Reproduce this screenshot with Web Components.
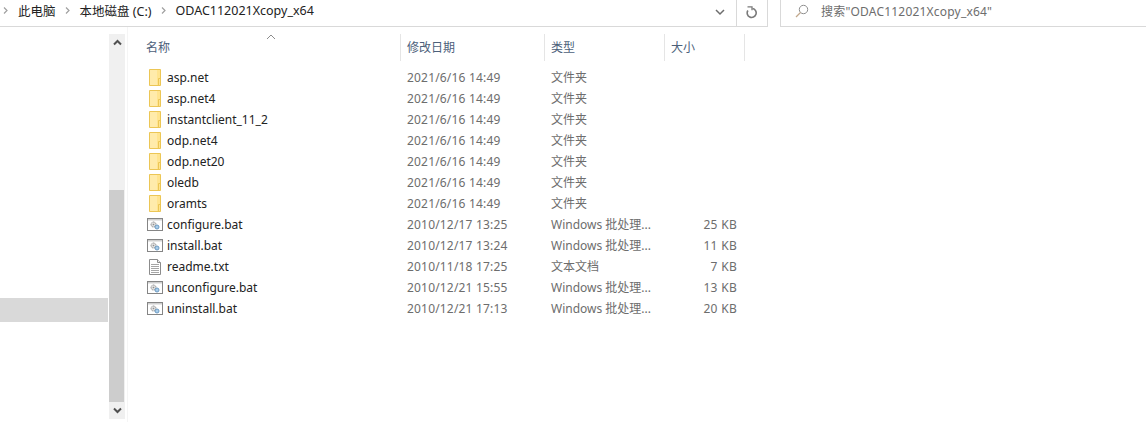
<!DOCTYPE html>
<html>
<head>
<meta charset="utf-8">
<title>ODAC112021Xcopy_x64</title>
<style>
  html, body { margin: 0; height: 100%; background: #fff; overflow: hidden; }
  body { font: 12px "Noto Sans", "Noto Sans CJK SC", sans-serif; }
</style>
</head>
<body>
<explorer-window>
  <address-bar slot="top">
    <bread-crumb>此电脑</bread-crumb>
    <bread-crumb>本地磁盘 (C:)</bread-crumb>
    <bread-crumb>ODAC112021Xcopy_x64</bread-crumb>
  </address-bar>
  <nav-pane slot="nav"></nav-pane>
  <file-list slot="files">
    <file-row kind="folder" name="asp.net" date="2021/6/16 14:49" type="文件夹"></file-row>
    <file-row kind="folder" name="asp.net4" date="2021/6/16 14:49" type="文件夹"></file-row>
    <file-row kind="folder" name="instantclient_11_2" date="2021/6/16 14:49" type="文件夹"></file-row>
    <file-row kind="folder" name="odp.net4" date="2021/6/16 14:49" type="文件夹"></file-row>
    <file-row kind="folder" name="odp.net20" date="2021/6/16 14:49" type="文件夹"></file-row>
    <file-row kind="folder" name="oledb" date="2021/6/16 14:49" type="文件夹"></file-row>
    <file-row kind="folder" name="oramts" date="2021/6/16 14:49" type="文件夹"></file-row>
    <file-row kind="bat" name="configure.bat" date="2010/12/17 13:25" type="Windows 批处理..." size="25 KB"></file-row>
    <file-row kind="bat" name="install.bat" date="2010/12/17 13:24" type="Windows 批处理..." size="11 KB"></file-row>
    <file-row kind="txt" name="readme.txt" date="2010/11/18 17:25" type="文本文档" size="7 KB"></file-row>
    <file-row kind="bat" name="unconfigure.bat" date="2010/12/21 15:55" type="Windows 批处理..." size="13 KB"></file-row>
    <file-row kind="bat" name="uninstall.bat" date="2010/12/21 17:13" type="Windows 批处理..." size="20 KB"></file-row>
  </file-list>
</explorer-window>

<script>
const ICONS = {
  folder: `<svg width="16" height="18" viewBox="0 0 16 18">
    <path d="M2.500 0.500h11v16h-11z" fill="#ffe48f"/>
    <path d="M3 1h7v15H3z" fill="#ffebab"/>
    <path d="M2.500 0.500h11v16h-11z" fill="none" stroke="#ecc655"/>
    <path d="M11.500 16.500v-7h2" fill="none" stroke="#ecc655"/>
  </svg>`,
  bat: `<svg width="16" height="18" viewBox="0 0 16 18">
    <rect x="0.500" y="2.500" width="15" height="12" fill="#fff" stroke="#858585"/>
    <path d="M1 3h14v1.500H1z" fill="#cfcfcf"/>
    <circle cx="6.500" cy="8.500" r="2.500" fill="#e0e0e0" stroke="#8f8f8f" stroke-dasharray="1.500 0.700"/>
    <circle cx="6.500" cy="8.500" r="0.800" fill="#8f8f8f"/>
    <circle cx="10" cy="11" r="2" fill="#a9cdea" stroke="#6c9bc2"/>
  </svg>`,
  txt: `<svg width="16" height="18" viewBox="0 0 16 18">
    <path d="M2.500 1.500h8l3 3v12h-11z" fill="#fff" stroke="#8c8c8c"/>
    <path d="M4 6.500h8M4 8.500h8M4 10.500h8M4 12.500h8M4 14.500h8" stroke="#a6a6a6"/>
    <path d="M10.500 1.500v3h3" fill="#eee" stroke="#8c8c8c"/>
  </svg>`
};

class ExplorerWindow extends HTMLElement {
  constructor() {
    super();
    this.attachShadow({mode: 'open'}).innerHTML = `
      <style>
        :host { display: flex; flex-direction: column; height: 422px; }
        .main { flex: 1; display: flex; min-height: 0; }
      </style>
      <slot name="top"></slot>
      <div class="main">
        <slot name="nav"></slot>
        <slot name="files"></slot>
      </div>`;
  }
}

class AddressBar extends HTMLElement {
  constructor() {
    super();
    this.attachShadow({mode: 'open'}).innerHTML = `
      <style>
        :host { display: flex; height: 27px; flex: none; color: #222; }
        .path { width: 768px; display: flex; align-items: center; box-sizing: border-box;
                border-bottom: 1px solid #d9d9d9; border-right: 1px solid #d9d9d9; padding-left: 3px; }
        .crumbs { flex: 1; display: flex; align-items: center; height: 26px; box-sizing: border-box;
                  padding-bottom: 6px; font-size: 12.500px; }
        .drop { width: 33px; height: 26px; display: flex; align-items: center; justify-content: center; padding-bottom: 2px; box-sizing: border-box; }
        .refresh { width: 31px; height: 26px; display: flex; align-items: center; justify-content: center; padding-bottom: 2px;
                   border-left: 1px solid #d9d9d9; box-sizing: border-box; }
        .search { margin-left: 12px; flex: 1; box-sizing: border-box; border-left: 1px solid #d9d9d9;
                  border-bottom: 1px solid #d9d9d9; display: flex; align-items: center; padding: 0 0 4px 14px; color: #6d6d6d; }
        .search span { margin-left: 12px; letter-spacing: 0.200px; padding-bottom: 1px; }
      </style>
      <div class="path">
        <div class="crumbs"><slot></slot></div>
        <div class="drop"><svg width="10" height="7" viewBox="0 0 10 7"><path d="M1 1l4 4 4-4" fill="none" stroke="#6d6d6d" stroke-width="1.500"/></svg></div>
        <div class="refresh"><svg width="12" height="13" viewBox="0 0 12 13"><path d="M6.500 2.500a4.500 4.500 0 1 1-4.600 2" fill="none" stroke="#7a7a7a" stroke-width="1.600"/><path d="M1.500 0.800h4.500v3.500" fill="none" stroke="#7a7a7a" stroke-width="1.300"/></svg></div>
      </div>
      <div class="search">
        <svg width="14" height="14" viewBox="0 0 14 14"><circle cx="8.500" cy="5.500" r="4.200" fill="none" stroke="#8f8f8f"/><path d="M5.500 8.500L1 13" stroke="#c2a88c" stroke-width="1.300"/></svg>
        <span>搜索"ODAC112021Xcopy_x64"</span>
      </div>`;
  }
}

class BreadCrumb extends HTMLElement {
  constructor() {
    super();
    this.attachShadow({mode: 'open'}).innerHTML = `
      <style>
        :host { display: flex; align-items: center; }
        svg { margin-right: 10px; }
        .t { margin-right: 9px; }
      </style>
      <svg width="5" height="7" viewBox="0 0 5 7"><path d="M1 0.500l3 3-3 3" fill="none" stroke="#a0a0a0" stroke-width="1.200"/></svg>
      <span class="t"><slot></slot></span>`;
  }
}

class NavPane extends HTMLElement {
  constructor() {
    super();
    this.attachShadow({mode: 'open'}).innerHTML = `
      <style>
        :host { display: flex; width: 128px; flex: none; box-sizing: border-box; border-right: 1px solid #f5f5f5; padding-top: 7px; padding-bottom: 3px; }
        .tree { width: 108px; margin-right: 1px; padding-top: 264px; box-sizing: border-box; }
        .sel { height: 24px; background: #d9d9d9; }
        .bar { width: 16px; display: flex; flex-direction: column; background: #f0f0f0; }
        .btn { height: 17px; display: flex; align-items: center; justify-content: center; flex: none; }
        .gap { height: 139px; flex: none; }
        .thumb { flex: 1; background: #cdcdcd; margin-right: 1px; }
      </style>
      <div class="tree"><div class="sel"></div></div>
      <div class="bar">
        <div class="btn"><svg width="9" height="7" viewBox="0 0 9 7"><path d="M1 5.500l3.500-3.500 3.500 3.500" fill="none" stroke="#505050" stroke-width="2"/></svg></div>
        <div class="gap"></div>
        <div class="thumb"></div>
        <div class="btn"><svg width="9" height="7" viewBox="0 0 9 7"><path d="M1 1.500l3.500 3.500 3.500-3.500" fill="none" stroke="#505050" stroke-width="2"/></svg></div>
      </div>`;
  }
}

class FileList extends HTMLElement {
  constructor() {
    super();
    this.attachShadow({mode: 'open'}).innerHTML = `
      <style>
        :host { display: block; flex: 1; padding-top: 7px; }
        .head { display: grid; grid-template-columns: 273px 144px 120px 80px; height: 27px; }
        .head div { border-right: 1px solid #e5e5e5; box-sizing: border-box; color: #4c607a;
                    display: flex; align-items: center; padding: 0 0 2px 6px; height: 27px; }
        .head div:first-child { padding-left: 18px; position: relative; }
        .head svg { position: absolute; left: 138px; top: 0; }
        .rows { padding-top: 6px; }
      </style>
      <div class="head">
        <div>名称<svg width="10" height="6" viewBox="0 0 10 6"><path d="M1 5l4-4 4 4" fill="none" stroke="#8c8c8c"/></svg></div>
        <div>修改日期</div>
        <div>类型</div>
        <div>大小</div>
      </div>
      <div class="rows"><slot></slot></div>`;
  }
}

class FileRow extends HTMLElement {
  connectedCallback() {
    const a = n => this.getAttribute(n) || '';
    this.attachShadow({mode: 'open'}).innerHTML = `
      <style>
        :host { display: grid; grid-template-columns: 272px 144px 120px 73px; height: 21px; align-items: center; color: #6d6d6d; }
        .name { display: flex; align-items: center; color: #222; padding-left: 19px; }
        .name svg { flex: none; margin-right: 4px; }
        .date { padding-left: 7px; letter-spacing: 0.180px; }
        .type { padding: 0 0 2px 7px; }
        .size { text-align: right; letter-spacing: 0.300px; }
      </style>
      <div class="name">${ICONS[a('kind')]}<span>${a('name')}</span></div>
      <div class="date">${a('date')}</div>
      <div class="type">${a('type')}</div>
      <div class="size">${a('size')}</div>`;
  }
}

customElements.define('explorer-window', ExplorerWindow);
customElements.define('address-bar', AddressBar);
customElements.define('bread-crumb', BreadCrumb);
customElements.define('nav-pane', NavPane);
customElements.define('file-list', FileList);
customElements.define('file-row', FileRow);
</script>
</body>
</html>
